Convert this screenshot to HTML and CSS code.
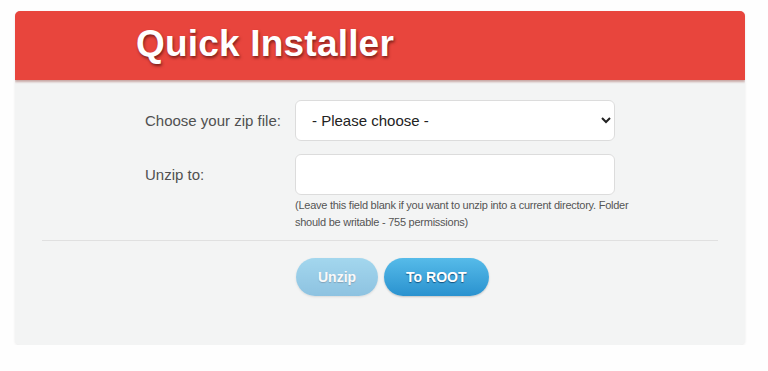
FILE: index.html
```html
<!DOCTYPE html>
<html lang="en">
<head>
  <meta charset="utf-8" />
  <title>Quick Installer</title>
  <link rel="stylesheet" href="styles.css">
</head>
<body>
  <main class="installer">
    <header class="banner">
      <h1 class="title">Quick Installer</h1>
    </header>

    <form class="body">
      <div class="row">
        <label class="label" for="zipfile">Choose your zip file:</label>
        <div class="field">
          <select id="zipfile" class="control">
            <option>- Please choose -</option>
          </select>
        </div>
      </div>

      <div class="row row-last">
        <label class="label" for="unzipto">Unzip to:</label>
        <div class="field">
          <input id="unzipto" class="control" type="text" />
          <p class="hint">(Leave this field blank if you want to unzip into a current directory. Folder should be writable - 755 permissions)</p>
        </div>
      </div>

      <hr class="divider" />

      <div class="actions">
        <button type="button" class="btn" disabled>Unzip</button>
        <button type="button" class="btn">To ROOT</button>
      </div>
    </form>
  </main>
</body>
</html>
```

FILE: styles.css
```css
* { box-sizing: border-box; }
html, body {
  margin: 0;
  background: #fefefe;
  font-family: "Liberation Sans", Arial, sans-serif;
  color: #555;
}
body { padding: 11px 23px 0 15px; }

.installer {
  width: 730px;
  background: #f3f4f4;
  border-radius: 5px;
  box-shadow: 0 1px 3px rgba(0,0,0,0.08);
  overflow: hidden;
}
.banner {
  height: 69px;
  background: #e8453d;
  box-shadow: 0 2px 2px rgba(120,30,20,0.35);
  padding-left: 121px;
  position: relative;
}
.title {
  margin: 0;
  font-size: 37px;
  line-height: 66px;
  font-weight: bold;
  color: #fff;
  letter-spacing: 0.2px;
  text-shadow: 1px 2px 3px rgba(90,20,15,0.75);
}

.body { padding: 20px 27px 49px; }
.row {
  display: flex;
  width: 470px;
  margin: 0 auto 13px;
}
.row-last { margin-bottom: 9px; }
.label {
  width: 151px;
  font-size: 15px;
  line-height: 41px;
  color: #505050;
}
.field { width: 320px; }
.control {
  display: block;
  width: 320px;
  height: 41px;
  background: #fff;
  border: 1px solid #dcdcdc;
  border-radius: 6px;
  font-family: inherit;
  font-size: 15px;
  color: #222;
  padding: 0 12px;
}
.hint {
  margin: 2px 0 0 0;
  width: 345px;
  font-size: 11px;
  line-height: 17px;
  letter-spacing: -0.25px;
  color: #555;
}
.divider {
  border: 0;
  border-top: 1px solid #e0e0e0;
  margin: 0 0 17px;
}
.actions {
  display: flex;
  gap: 6px;
  width: 470px;
  margin: 0 auto;
  padding-left: 151px;
}
.btn {
  height: 38px;
  padding: 0 22px;
  border: 0;
  border-radius: 19px;
  font-family: inherit;
  font-size: 14px;
  font-weight: bold;
  color: #fff;
  background: linear-gradient(#56bbe9, #2a92cf);
  text-shadow: 0 1px 1px rgba(0,50,90,0.7);
  box-shadow: 0 1px 2px rgba(0,0,0,0.2);
}
.btn:disabled { opacity: 0.5; }
```
